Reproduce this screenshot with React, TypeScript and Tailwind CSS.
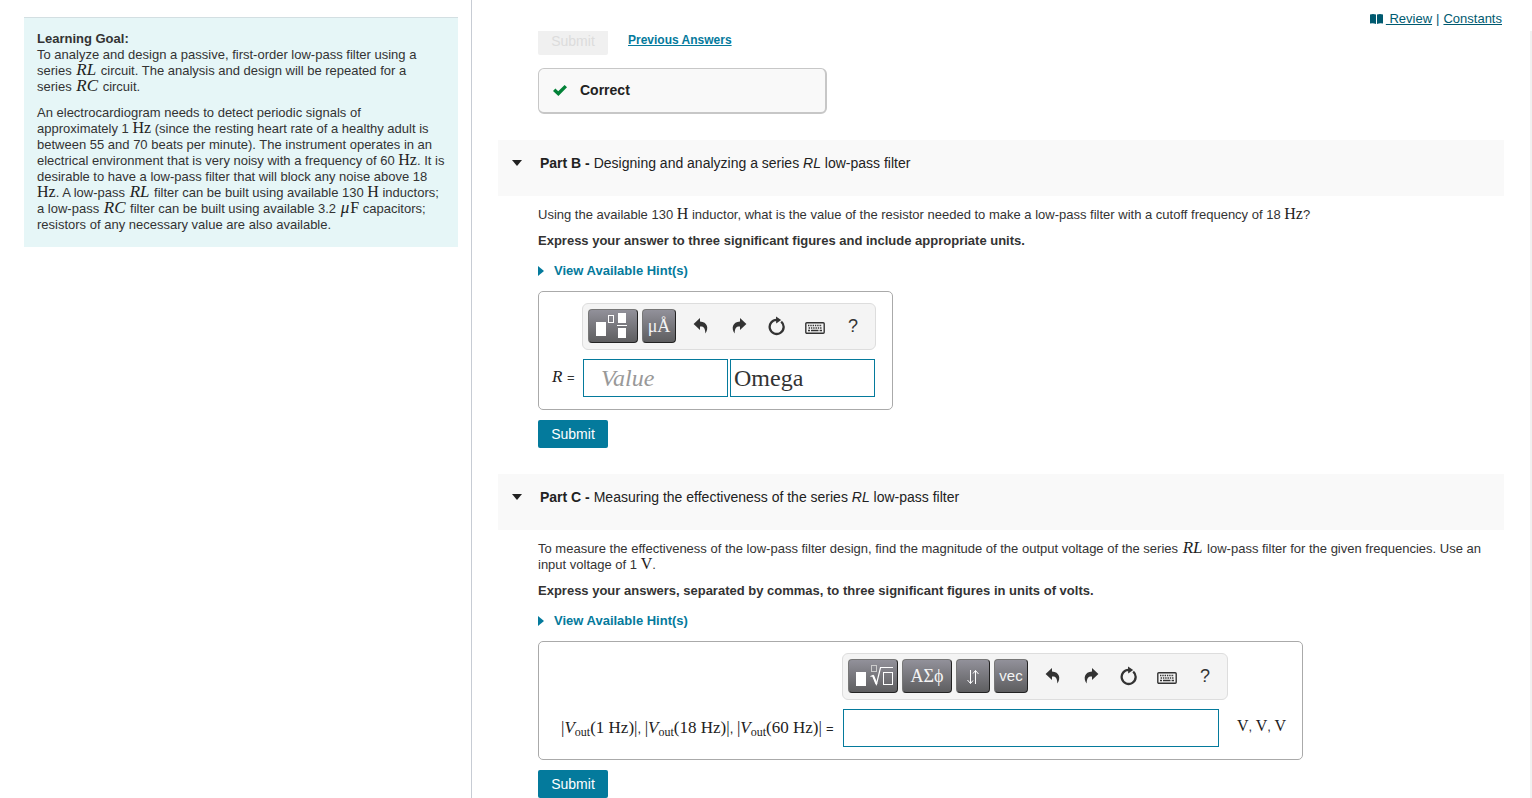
import type { ReactNode } from "react";

const SERIF = "font-['Liberation_Serif',serif]";

// upright math, used for units
const Unit = ({ children }: { children: ReactNode }) => (
  <span className="font-['Liberation_Serif',serif] text-[16px] leading-[10px] text-[#222]">
    {children}
  </span>
);

// italic math, used for variables
const Var = ({ children }: { children: ReactNode }) => (
  <i className="font-['Liberation_Serif',serif] text-[17px] leading-[10px] text-[#222] px-px">
    {children}
  </i>
);

const UndoIcon = ({ flip = false }: { flip?: boolean }) => (
  <svg
    width="16"
    height="16"
    viewBox="0 0 16 16"
    fill="#333"
    className={flip ? "-scale-x-100" : ""}
  >
    <path d="M7 0 L0.6 6 L7 12 V8.6 C10.4 8.3 12 9.6 12.4 15.4 C16 10.6 14.6 3.8 7 3.5 Z" />
  </svg>
);

const ResetIcon = () => (
  <svg width="18" height="20" viewBox="0 0 18 20" fill="none">
    <path
      d="M12.6 5.2 A7 7 0 1 1 8.2 4"
      stroke="#333"
      strokeWidth="2.3"
      transform="rotate(6 9 11)"
    />
    <path d="M8 0.6 L13.2 4 L8.2 7.6 Z" fill="#333" />
  </svg>
);

const KeyboardIcon = () => (
  <svg width="20" height="12" viewBox="0 0 20 12" fill="none">
    <rect x="0.8" y="0.8" width="18.4" height="10.4" rx="1" stroke="#333" strokeWidth="1.4" />
    <path d="M3 3.5H17" stroke="#333" strokeWidth="1.4" strokeDasharray="1.4 0.9" />
    <path d="M3.6 6H17" stroke="#333" strokeWidth="1.3" strokeDasharray="1.4 0.9" />
    <path d="M3 8.5H5M6 8.5H13.5M14.6 8.5H17" stroke="#333" strokeWidth="1.4" />
  </svg>
);

const TemplateIcon = () => (
  <svg width="34" height="28" viewBox="0 0 34 28" fill="none">
    <path d="M0 10H10V24H0ZM22 1H30V11H22ZM22 16H30V26H22Z" fill="#fff" />
    <rect x="12.5" y="3.5" width="5" height="7" stroke="#fff" />
    <path d="M21 13.5H31" stroke="#fff" />
  </svg>
);

const RootIcon = () => (
  <svg width="38" height="24" viewBox="0 0 38 24" fill="none" className="ml-1">
    <path d="M0 8H10V22H0Z" fill="#fff" />
    <rect x="15.5" y="1.5" width="5" height="6" stroke="#ccc" />
    <path d="M14.5 12.5L17 11.5L20.5 20L24.5 3.5H37" stroke="#fff" strokeWidth="1.2" />
    <path d="M17 11.5L20.5 20" stroke="#fff" strokeWidth="2" />
    <rect x="27.5" y="8.5" width="9" height="12" stroke="#fff" />
  </svg>
);

const ArrowsIcon = () => (
  <svg width="16" height="18" viewBox="0 0 16 18" fill="none" stroke="#fff" className="mt-0.5">
    <path d="M5.5 2V15.5M2.5 12L5.5 15.5L8 12.5M10.5 16V2.5M8 5.5L10.5 2.5L13.5 6" />
  </svg>
);

const DarkButton = ({
  label,
  wide = false,
  children,
}: {
  label: string;
  wide?: boolean;
  children: ReactNode;
}) => (
  <button
    aria-label={label}
    className={`${wide ? "w-[50px]" : "w-[34px]"} h-[34px] flex items-center justify-center rounded border border-t-[#777] border-l-[#777] border-r-[#222] border-b-[#222] bg-linear-to-b from-[#92919a] to-[#5e5e60] text-[#f4f4f4]`}
  >
    {children}
  </button>
);

const Toolbar = ({ children }: { children: ReactNode }) => (
  <div className="flex items-start gap-1 w-fit h-[47px] pt-[5px] pl-[5px] pr-[3px] bg-[#f4f4f4] border border-[#ddd] rounded-md">
    {children}
    <div className="flex items-center ml-0.5 [&>button]:w-[38px] [&>button]:h-[34px] [&>button]:flex [&>button]:items-center [&>button]:justify-center">
      <button aria-label="Undo">
        <UndoIcon />
      </button>
      <button aria-label="Redo">
        <UndoIcon flip />
      </button>
      <button aria-label="Reset">
        <ResetIcon />
      </button>
      <button aria-label="Keyboard shortcuts" className="pt-1">
        <KeyboardIcon />
      </button>
      <button aria-label="Help" className="text-[18px] text-[#333]">
        ?
      </button>
    </div>
  </div>
);

const PartHeader = ({ part, children }: { part: string; children: ReactNode }) => (
  <button className="flex items-start w-full h-14 pt-[15px] pl-[14px] bg-[#f9f9f9] text-left text-[14px] leading-4 text-[#222]">
    <svg width="10" height="6" viewBox="0 0 10 6" className="mt-[5px] mr-[18px]" fill="#222">
      <path d="M0 0H10L5 6Z" />
    </svg>
    <span>
      <b>{part} -</b> {children}
    </span>
  </button>
);

const Hints = () => (
  <button className="flex items-center mt-[14px] font-bold leading-4 text-[#047a9c]">
    <svg width="6" height="10" viewBox="0 0 6 10" className="mr-[10px]" fill="#047a9c">
      <path d="M0 0L6 5L0 10Z" />
    </svg>
    View Available Hint(s)
  </button>
);

const Submit = () => (
  <button className="block w-[70px] h-7 mt-[10px] rounded-xs bg-[#047a9c] text-[14px] text-white">
    Submit
  </button>
);

const Comma = () => <span className="font-['Liberation_Sans',sans-serif] text-[13px]">, </span>;

const Vout = ({ freq }: { freq: string }) => (
  <>
    |<i>V</i>
    <sub className="text-[12px] leading-none bottom-[-3px]">out</sub>
    <span>({freq} Hz)|</span>
  </>
);

const App = () => {
  return (
    <div className="flex min-h-screen bg-white font-['Liberation_Sans',Arial,sans-serif] text-[13px] leading-4 text-[#333]">
      <aside className="w-[472px] shrink-0 border-r border-[#c7ccd4] pt-[17px] pl-6 pr-[13px]">
        <div className="bg-[#e6f6f7] border-t border-[#d3dfe2] px-[13px] pt-[13px] pb-[14px]">
          <p>
            <b>Learning Goal:</b>
            <br />
            To analyze and design a passive, first-order low-pass filter using a series{" "}
            <Var>RL</Var> circuit. The analysis and design will be repeated for a{" "}
            <span className="whitespace-nowrap">
              series <Var>RC</Var>
            </span>{" "}
            circuit.
          </p>
          <p className="mt-[10px]">
            An electrocardiogram needs to detect periodic signals of approximately 1{" "}
            <Unit>Hz</Unit> (since the resting heart rate of a healthy adult is between 55 and 70
            beats per minute). The instrument operates in an electrical environment that is very
            noisy with a frequency of 60 <Unit>Hz</Unit>. It is desirable to have a low-pass filter
            that will block any noise above 18 <Unit>Hz</Unit>. A low-pass <Var>RL</Var> filter can
            be built using available 130 <Unit>H</Unit> inductors; a low-pass <Var>RC</Var> filter
            can be built using available 3.2 <Var>μ</Var>
            <Unit>F</Unit> capacitors; resistors of any necessary value are also available.
          </p>
        </div>
      </aside>

      <div className="flex-1 min-w-0 flex flex-col">
        <nav className="flex justify-end items-center h-[31px] pt-[6px] pr-[30px] text-[#005a70]">
          <svg width="13" height="10" viewBox="0 0 13 10" className="mr-[3px]" fill="#005a70">
            <path d="M0 0.5Q3 -0.5 6 0.5V10Q3 8.8 0 9.6ZM7 0.5Q10 -0.5 13 0.5V9.6Q10 8.8 7 10Z" />
          </svg>
          <a href="#review" className="underline whitespace-pre">
            {" Review"}
          </a>
          <span className="mx-1">|</span>
          <a href="#constants" className="underline">
            Constants
          </a>
        </nav>

        <main className="flex-1 border-r-2 border-[#f1f1f1] pl-[26px] pr-[26px]">
          <div className="pl-10">
            <div className="flex items-start">
              <button
                disabled
                className="w-[70px] h-6 pb-1 rounded-b-xs bg-[#f0f0f0] text-[14px] leading-5 text-[#dcdcdc]"
              >
                Submit
              </button>
              <a
                href="#previous"
                className="ml-5 mt-px text-[12px] font-bold text-[#047a9c] underline"
              >
                Previous Answers
              </a>
            </div>
            <div className="flex items-center w-[289px] h-[46px] mt-[13px] pl-[14px] pb-px bg-[#f9f9f9] border border-[#c7c7c7] border-b-2 border-r-2 rounded-md">
              <svg width="14" height="11" viewBox="0 0 14 11" className="mr-[13px]">
                <path d="M0 6L2.4 3.4L5.2 6.2L11.6 0L14 2.2L5.4 11Z" fill="#038238" />
              </svg>
              <b className="text-[14px] text-[#222]">Correct</b>
            </div>
          </div>

          <section className="mt-[26px]">
            <PartHeader part="Part B">
              Designing and analyzing a series <i>RL</i> low-pass filter
            </PartHeader>
            <div className="pl-10 pt-[11px]">
              <p>
                Using the available 130 <Unit>H</Unit> inductor, what is the value of the resistor
                needed to make a low-pass filter with a cutoff frequency of 18 <Unit>Hz</Unit>?
              </p>
              <p className="mt-[10px] font-bold">
                Express your answer to three significant figures and include appropriate units.
              </p>
              <Hints />
              <div className="w-fit h-[119px] mt-3 pt-[11px] pl-3 pr-4 border border-[#aaa] rounded-[5px]">
                <div className="pl-[31px]">
                  <Toolbar>
                    <DarkButton label="Templates" wide>
                      <TemplateIcon />
                    </DarkButton>
                    <DarkButton label="Units">
                      <span className={`${SERIF} text-[18px]`}>μÅ</span>
                    </DarkButton>
                  </Toolbar>
                </div>
                <div className="flex items-center mt-[9px]">
                  <label htmlFor="value" className="w-8 whitespace-nowrap">
                    <Var>R</Var> =
                  </label>
                  <input
                    id="value"
                    placeholder="Value"
                    className={`${SERIF} w-[145px] h-[38px] pl-[17px] border border-[#047a9c] text-[24px] placeholder:italic placeholder:text-[#999]`}
                  />
                  <input
                    aria-label="Units"
                    defaultValue="Omega"
                    className={`${SERIF} w-[145px] h-[38px] ml-0.5 pl-[3px] border border-[#047a9c] text-[24px]`}
                  />
                </div>
              </div>
              <Submit />
            </div>
          </section>

          <section className="mt-[26px]">
            <PartHeader part="Part C">
              Measuring the effectiveness of the series <i>RL</i> low-pass filter
            </PartHeader>
            <div className="pl-10 pt-[11px]">
              <p>
                To measure the effectiveness of the low-pass filter design, find the magnitude of
                the output voltage of the series <Var>RL</Var> low-pass filter for the given
                frequencies. Use an input voltage of 1 <Unit>V</Unit>.
              </p>
              <p className="mt-[10px] font-bold">
                Express your answers, separated by commas, to three significant figures in units of
                volts.
              </p>
              <Hints />
              <div className="w-fit h-[119px] mt-3 pt-[11px] pl-[22px] pr-4 border border-[#aaa] rounded-[5px]">
                <div className="grid grid-cols-[282px_auto_auto]">
                  <div className="col-start-2 -ml-px">
                    <Toolbar>
                      <DarkButton label="Templates" wide>
                        <RootIcon />
                      </DarkButton>
                      <DarkButton label="Greek letters" wide>
                        <span className={`${SERIF} text-[18px]`}>ΑΣϕ</span>
                      </DarkButton>
                      <DarkButton label="Arrows">
                        <ArrowsIcon />
                      </DarkButton>
                      <DarkButton label="Vectors">
                        <span className="text-[15px]">vec</span>
                      </DarkButton>
                    </Toolbar>
                  </div>
                </div>
                <div className="flex items-center mt-[9px]">
                  <label
                    htmlFor="voltages"
                    className={`${SERIF} w-[282px] text-[17px] text-[#222] whitespace-nowrap`}
                  >
                    <Vout freq="1" />
                    <Comma />
                    <Vout freq="18" />
                    <Comma />
                    <Vout freq="60" />{" "}
                    <span className="font-['Liberation_Sans',sans-serif] text-[13px]">=</span>
                  </label>
                  <input
                    id="voltages"
                    className={`${SERIF} w-[376px] h-[38px] px-1 border border-[#047a9c] text-[24px]`}
                  />
                  <span className="ml-[18px] mb-0.5">
                    <Unit>V</Unit>, <Unit>V</Unit>, <Unit>V</Unit>
                  </span>
                </div>
              </div>
              <Submit />
            </div>
          </section>
        </main>
      </div>
    </div>
  );
};

export default App;
